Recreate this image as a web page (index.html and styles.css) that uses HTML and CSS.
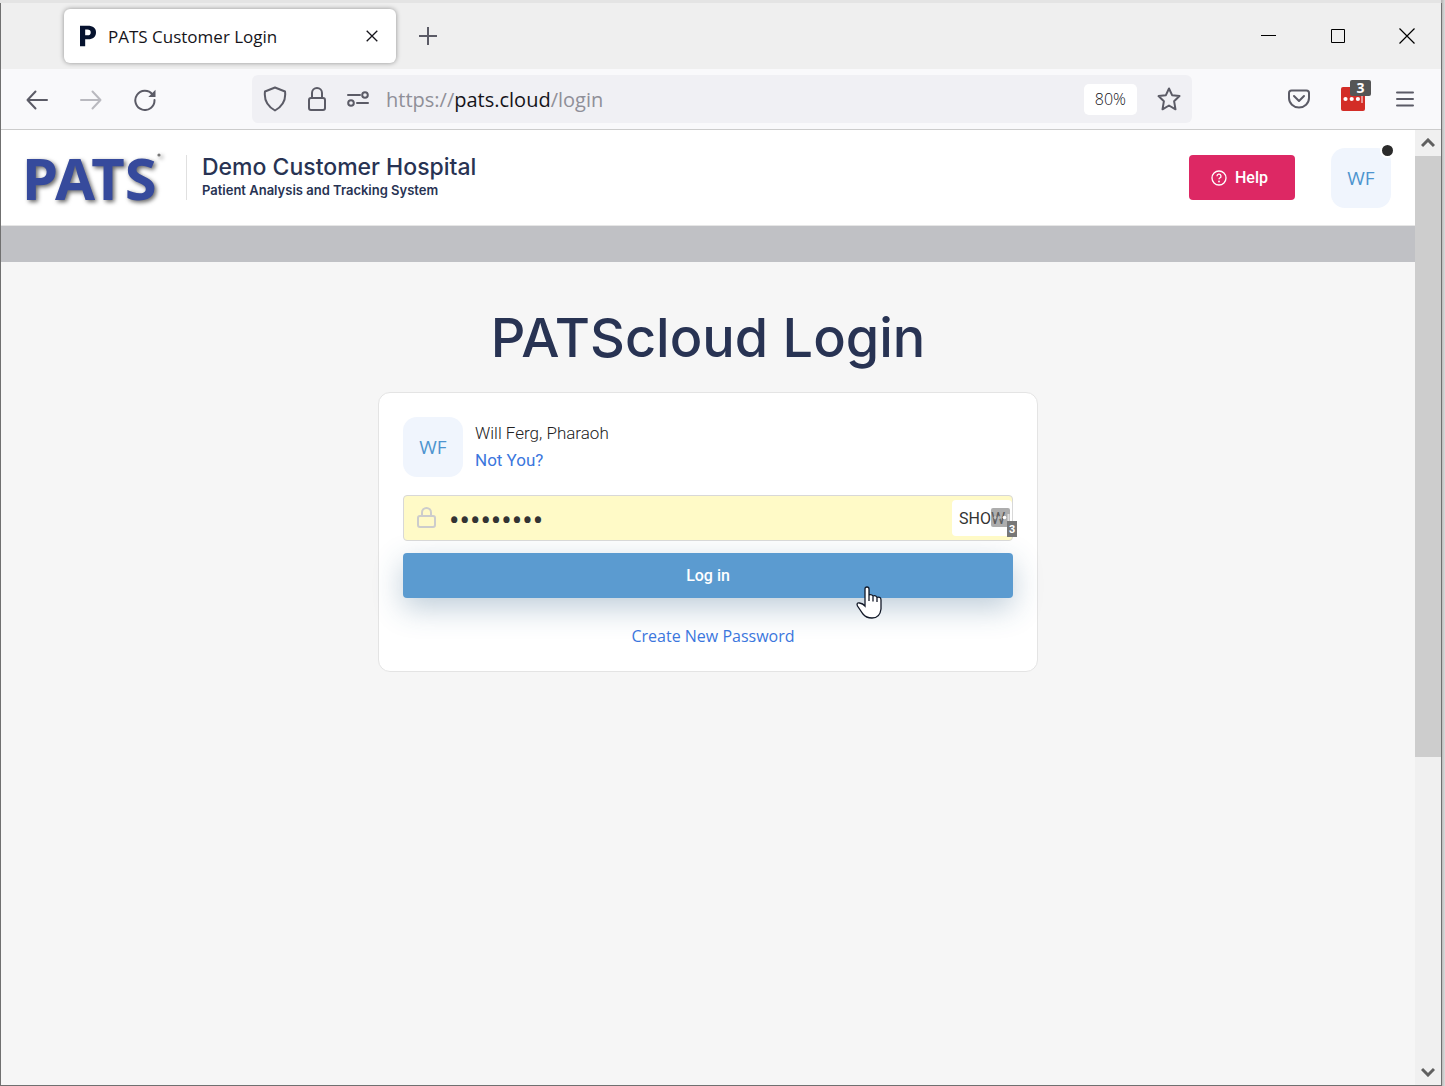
FILE: index.html
```html
<!DOCTYPE html>
<html lang="en">
<head>
    <meta charset="UTF-8">
    <meta name="viewport" content="width=device-width, initial-scale=1.0">
    <title>PATS Customer Login</title>
    <link rel="stylesheet" href="styles.css">
</head>
<body>

<div class="window">
    <div class="titlebar">
        <div class="tab">
            <svg class="favicon" width="16" height="22" viewBox="0 0 17 22"><path fill="#06122e" fill-rule="evenodd" d="M0 0H8C14 0 17 2.600 17 7C17 12 14 14.500 8.500 14.500H5.500V22H0ZM5.500 4.200V10.300H7.800C10.200 10.300 11.400 9.300 11.400 7.200C11.400 5.200 10.200 4.200 7.800 4.200Z"/></svg>
            <span class="tab-title">PATS Customer Login</span>
            <button class="icon-button" aria-label="Close tab">
                <svg width="12" height="12" viewBox="0 0 12 12"><path d="M.7 .7L11.300 11.300M11.300 .7L.7 11.300" stroke="#15141a" stroke-width="1.300"/></svg>
            </button>
        </div>
        <button class="icon-button" aria-label="New tab">
            <svg width="18" height="18" viewBox="0 0 18 18"><path d="M9 0V18M0 9H18" stroke="#5b5b66" stroke-width="2"/></svg>
        </button>
        <div class="window-controls">
            <button class="icon-button" aria-label="Minimize">
                <svg width="16" height="16" viewBox="0 0 16 16"><path d="M0 7.500H15" stroke="#000"/></svg>
            </button>
            <button class="icon-button" aria-label="Maximize">
                <svg width="16" height="16" viewBox="0 0 16 16"><path d="M1.500 1.500H14.500V14.500H1.500Z" fill="none" stroke="#000"/></svg>
            </button>
            <button class="icon-button" aria-label="Close">
                <svg width="16" height="16" viewBox="0 0 16 16"><path d="M.5 .5L15.500 15.500M15.500 .5L.5 15.500" stroke="#000" stroke-width="1.200"/></svg>
            </button>
        </div>
    </div>

    <div class="toolbar">
        <div class="nav-buttons">
            <button class="icon-button" aria-label="Back">
                <svg width="22" height="20" viewBox="0 0 22 20"><path d="M9.500 1.500L1.500 10L9.500 18.500M1.500 10H21" class="line"/></svg>
            </button>
            <button class="icon-button faded" aria-label="Forward" disabled>
                <svg width="22" height="20" viewBox="0 0 22 20"><path d="M12.500 1.500L20.500 10L12.500 18.500M20.500 10H1" class="line"/></svg>
            </button>
            <button class="icon-button" aria-label="Reload">
                <svg width="22" height="22" viewBox="0 0 22 22"><path d="M18.500 5.500A9.600 9.600 0 1 0 20.500 11" class="line"/><path d="M21.500 .8V8H14.300Z" fill="#5b5b66"/></svg>
            </button>
        </div>
        <div class="address-bar">
            <svg width="24" height="26" viewBox="0 0 24 26"><path d="M12 1.500L22 5.500C23 13 20 20 12 24.500C4 20 1 13 2 5.500Z" class="line"/></svg>
            <svg width="20" height="26" viewBox="0 0 20 26"><rect x="2" y="12" width="16" height="12" rx="2" class="line"/><path d="M5 12V7A5 5 0 0 1 15 7V12" class="line"/></svg>
            <svg width="22" height="16" viewBox="0 0 22 16"><path d="M1 4H13M10 12H21" class="line"/><circle cx="18" cy="4" r="2.800" class="line"/><circle cx="4" cy="12" r="2.800" class="line"/></svg>
            <div class="url">https://<span>pats.cloud</span>/login</div>
            <button class="zoom-level">80%</button>
            <button class="icon-button" aria-label="Bookmark this page">
                <svg width="24" height="24" viewBox="0 0 24 24"><path d="M12 1.500L15.100 8.200L22.500 9.100L17.100 14.200L18.500 22.300L12 18.500L5.500 22.300L6.900 14.200L1.500 9.100L8.900 8.200Z" class="line"/></svg>
            </button>
        </div>
        <div class="tools">
            <button class="icon-button" aria-label="Save to Pocket">
                <svg width="22" height="20" viewBox="0 0 22 20"><path d="M3.500 1.500H18.500Q21 1.500 21 4V9A10 9.500 0 0 1 1 9V4Q1 1.500 3.500 1.500Z" class="line"/><path d="M6 7L11 12L16 7" class="line"/></svg>
            </button>
            <button class="icon-button extension" aria-label="Password manager">
                <svg width="24" height="24" viewBox="0 0 24 24"><rect width="24" height="24" rx="2" fill="#d32d27"/><circle cx="4.500" cy="12" r="2.100" fill="#fff"/><circle cx="10.700" cy="12" r="2.100" fill="#fff"/><circle cx="16.900" cy="12" r="2.100" fill="#fff"/><path d="M21 8V16" stroke="#fff"/></svg>
                <span class="extension-count">3</span>
            </button>
            <button class="icon-button" aria-label="Open menu">
                <svg width="18" height="16" viewBox="0 0 18 16"><path d="M1 1.500H17M1 8H17M1 14.500H17" class="line"/></svg>
            </button>
        </div>
    </div>

    <div class="viewport">
        <div class="page">
            <header class="header">
                <div class="logo">
                    PATS
                    <svg width="4" height="4" viewBox="0 0 4 4"><circle cx="2" cy="2" r="1.600" fill="#777"/></svg>
                </div>
                <div class="customer">
                    <div class="customer-name">Demo Customer Hospital</div>
                    <div class="system-name">Patient Analysis and Tracking System</div>
                </div>
                <button class="help">
                    <svg width="16" height="16" viewBox="0 0 16 16"><circle cx="8" cy="8" r="7" fill="none" stroke="#fff" stroke-width="1.300"/><path d="M6 6.300A2 2 0 1 1 8.800 8Q8 8.400 8 9.300" fill="none" stroke="#fff" stroke-width="1.300"/><circle cx="8" cy="11.500" r=".9" fill="#fff"/></svg>
                    Help
                </button>
                <div class="avatar">WF<span class="status"></span></div>
            </header>
            <div class="menu-strip"></div>

            <main class="main">
                <h1>PATScloud Login</h1>
                <form class="card">
                    <div class="user">
                        <div class="avatar">WF</div>
                        <div>
                            <div class="user-name">Will Ferg, Pharaoh</div>
                            <a href="#">Not You?</a>
                        </div>
                    </div>
                    <div class="password-field">
                        <svg width="20" height="22" viewBox="0 0 20 22"><rect x="2" y="9" width="17" height="11" rx="2"/><path d="M6 9V5.500A4.500 4.500 0 0 1 15 5.500V9"/></svg>
                        <input type="password" value="password1" aria-label="Password">
                        <button type="button" class="show">SHOW</button>
                        <span class="fill-icon">
                            <svg width="19" height="19" viewBox="0 0 19 19"><rect width="19" height="19" rx="2" fill="#777" fill-opacity=".6"/><circle cx="4" cy="9.500" r="1.500" fill="#ddd" fill-opacity=".6"/><circle cx="8.500" cy="9.500" r="1.500" fill="#ddd" fill-opacity=".6"/><circle cx="13.500" cy="9.500" r="1.800" fill="#fff"/><path d="M17.500 6V13" stroke="#ddd"/></svg>
                            <span class="fill-count">3</span>
                        </span>
                    </div>
                    <button type="button" class="login">Log in</button>
                    <a href="#" class="new-password">Create New Password</a>
                    <svg class="pointer" width="26" height="33" viewBox="0 0 26 33"><path d="M9 20V3Q9 1 11 1T13 3V9Q15.500 7.800 17 10Q19.500 9 21 11.300Q25 10.500 25 14V23Q24 32 16 32Q10 32 7 28L1.500 20Q0 16.500 3.500 17Q7 17.500 9 20ZM13 9V15M17 10V15.500M21 11.300V16" fill="#fff" stroke="#111827" stroke-width="1.300"/></svg>
                </form>
            </main>
        </div>
        <div class="scrollbar">
            <svg width="14" height="10" viewBox="0 0 14 10"><path d="M1 8L7 2L13 8"/></svg>
            <div class="thumb"></div>
            <svg width="14" height="10" viewBox="0 0 14 10"><path d="M1 2L7 8L13 2"/></svg>
        </div>
    </div>
</div>

</body>
</html>
```
FILE: styles.css
```css
* {
    box-sizing: border-box;
}
body {
    font-family: "Open Sans", sans-serif;
    margin: 0;
    padding: 3px 3px 0 0;
    background: linear-gradient(to left, #dcdcdc, #b0b0b0 4px, #e4e4e4 4px);
}
svg {
    display: block;
    flex-shrink: 0;
}
.window {
    display: flex;
    flex-direction: column;
    height: calc(100vh - 3px);
    border: 1px solid #707070;
    border-top: none;
}
.line {
    fill: none;
    stroke: #5b5b66;
    stroke-width: 2;
    stroke-linecap: round;
    stroke-linejoin: round;
}
.icon-button {
    display: flex;
    padding: 0;
    border: none;
    background: none;
    cursor: pointer;
}
.titlebar {
    display: flex;
    align-items: center;
    gap: 23px;
    height: 66px;
    padding: 0 26px 0 63px;
    background-color: #efefef;
}
.tab {
    display: flex;
    align-items: center;
    gap: 12px;
    width: 332px;
    height: 54px;
    padding: 0 18px 0 16px;
    border-radius: 6px;
    background-color: #fff;
    box-shadow: 0 0 5px rgba(0, 0, 0, 0.4);
}
.tab-title {
    flex: 1;
    font-size: 17px;
    color: #15141a;
}
.window-controls {
    display: flex;
    gap: 53px;
    margin-left: auto;
}
.toolbar {
    display: flex;
    align-items: center;
    height: 61px;
    padding: 0 27px 0 25px;
    border-bottom: 1px solid #ccc;
    background-color: #f9f9fb;
}
.nav-buttons {
    display: flex;
    align-items: center;
    gap: 32px;
    margin-right: 96px;
    padding-top: 2px;
}
.faded {
    opacity: 0.4;
}
.address-bar {
    flex: 1;
    display: flex;
    align-items: center;
    gap: 20px;
    height: 48px;
    padding: 0 11px;
    border-radius: 6px;
    background-color: #f0f0f4;
}
.url {
    flex: 1;
    margin-left: -3px;
    font-size: 20px;
    color: #8f8f98;
}
.url span {
    color: #15141a;
}
.zoom-level {
    height: 31px;
    padding: 0 11px;
    border: none;
    border-radius: 5px;
    background-color: #fff;
    font-family: "Open Sans", sans-serif;
    font-size: 16px;
    font-weight: 300;
    color: #15141a;
}
.tools {
    display: flex;
    align-items: center;
    gap: 31px;
    margin-left: 96px;
}
.extension {
    position: relative;
}
.extension-count {
    position: absolute;
    top: -7px;
    left: 9px;
    width: 21px;
    border-radius: 2px;
    background-color: #555;
    font: bold 14px/16px "Noto Sans", sans-serif;
    color: #fff;
}
.viewport {
    flex: 1;
    display: flex;
    min-height: 0;
}
.page {
    flex: 1;
    background-color: #f6f6f6;
}
.header {
    display: flex;
    align-items: center;
    height: 96px;
    padding: 0 24px 0 21px;
    border-bottom: 1px solid #e6e6e6;
    background-color: #fff;
}
.logo {
    display: flex;
    width: 164px;
    font: bold 58px/50px "Noto Sans", sans-serif;
    color: #364a9c;
    filter: drop-shadow(2px 2px 2px rgba(0, 0, 0, 0.6));
}
.customer {
    flex: 1;
    padding-left: 15px;
    border-left: 1px solid #e0e0e0;
    font-family: Inter, sans-serif;
    font-weight: 500;
    color: #283353;
}
.customer-name {
    font-size: 23px;
    line-height: 25px;
}
.system-name {
    font-size: 13px;
    font-weight: 600;
    line-height: 20px;
}
.help {
    display: flex;
    align-items: center;
    gap: 8px;
    width: 106px;
    height: 45px;
    margin-right: 36px;
    padding: 0 22px;
    border: none;
    border-radius: 4px;
    background-color: #dd2864;
    font: 500 16px Roboto, sans-serif;
    color: #fff;
    cursor: pointer;
}
.avatar {
    position: relative;
    display: flex;
    align-items: center;
    justify-content: center;
    width: 60px;
    height: 60px;
    border-radius: 14px;
    background-color: #f0f5fd;
    font-size: 19px;
    color: #4d94cf;
}
.status {
    position: absolute;
    top: -5px;
    right: -4px;
    width: 15px;
    height: 15px;
    border: 2px solid #fff;
    border-radius: 50%;
    background-color: #2b2b2b;
}
.menu-strip {
    height: 36px;
    background-color: #c0c1c5;
}
.main {
    padding: 44px 24px;
}
h1 {
    margin: 0 0 22px;
    font: 500 54px/64px Inter, sans-serif;
    text-align: center;
    color: #283353;
}
.card {
    position: relative;
    max-width: 660px;
    margin: 0 auto;
    padding: 24px 24px 23px;
    border: 1px solid #e4e4e4;
    border-radius: 12px;
    background-color: #fff;
}
a {
    color: #3b76dd;
    text-decoration: none;
}
.user {
    display: flex;
    align-items: center;
    gap: 12px;
    margin-bottom: 18px;
    font: 300 17px/27px Roboto, sans-serif;
}
.user .avatar {
    font: 19px "Open Sans", sans-serif;
}
.user a {
    font-weight: 400;
}
.user-name {
    color: #222;
}
.password-field {
    position: relative;
    display: flex;
    align-items: center;
    height: 46px;
    margin-bottom: 12px;
    padding-left: 12px;
    border: 1px solid #d8d8d8;
    border-radius: 4px;
    background-color: #fffac7;
}
.password-field svg {
    fill: none;
    stroke: #ccc;
    stroke-width: 2;
}
.password-field .fill-icon svg {
    stroke: none;
}
.password-field input {
    flex: 1;
    min-width: 0;
    padding: 4px 13px 0;
    border: none;
    outline: none;
    background: none;
    font: 31px Roboto, sans-serif;
    color: #333;
}
.show {
    width: 60px;
    height: 36px;
    padding: 0 7px;
    border: none;
    border-radius: 4px;
    background-color: #fff;
    font: 16px Roboto, sans-serif;
    text-align: left;
    color: #333;
}
.fill-icon {
    position: absolute;
    top: 12px;
    right: 2px;
}
.fill-count {
    position: absolute;
    top: 13px;
    left: 16px;
    width: 10px;
    background-color: #777;
    font: bold 11px/16px "Liberation Sans", sans-serif;
    text-align: center;
    color: #fff;
}
.login {
    display: block;
    width: 100%;
    height: 45px;
    border: none;
    border-radius: 4px;
    background-color: #5b9bd0;
    box-shadow: 0 10px 30px rgba(40, 90, 130, 0.3);
    font: 500 16px Roboto, sans-serif;
    color: #fff;
    cursor: pointer;
}
.new-password {
    display: block;
    margin-top: 26px;
    padding-left: 10px;
    font-size: 16px;
    line-height: 24px;
    text-align: center;
}
/* hand cursor over the login button */
.pointer {
    position: absolute;
    top: 193px;
    right: 155px;
}
.scrollbar {
    display: flex;
    flex-direction: column;
    align-items: center;
    width: 26px;
    padding: 8px 0;
    background-color: #f0f0f0;
}
.scrollbar path {
    fill: none;
    stroke: #606060;
    stroke-width: 3;
}
.thumb {
    width: 100%;
    height: 64%;
    margin: 8px 0 auto;
    background-color: #cdcdcd;
}
```
